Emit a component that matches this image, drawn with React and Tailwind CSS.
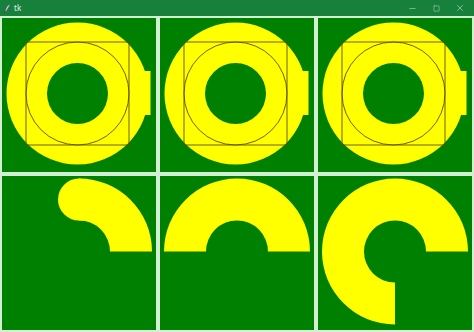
import { Minus, Square, X } from 'lucide-react';

const C = 75.5;

function pt(a, r, cx = C, cy = C) {
  const t = (a * Math.PI) / 180;
  return `${(cx + r * Math.cos(t)).toFixed(2)} ${(cy - r * Math.sin(t)).toFixed(2)}`;
}

// annular sector, angles in degrees counterclockwise from 3 o'clock
function sector(a0, a1, R, r, cx = C, cy = C) {
  const large = a1 - a0 > 180 ? 1 : 0;
  return `M ${pt(a0, R, cx, cy)} A ${R} ${R} 0 ${large} 0 ${pt(a1, R, cx, cy)} L ${pt(a1, r, cx, cy)} A ${r} ${r} 0 ${large} 1 ${pt(a0, r, cx, cy)} Z`;
}

function RingCanvas() {
  return (
    <svg viewBox="0 0 154 154" className="w-full h-full block">
      <path
        fillRule="evenodd"
        fill="#ffff00"
        d={`M ${C - 71} ${C} a 71 71 0 1 0 142 0 a 71 71 0 1 0 -142 0 Z M ${C - 30.5} ${C} a 30.5 30.5 0 1 0 61 0 a 30.5 30.5 0 1 0 -61 0 Z`}
      />
      <rect x="140" y="53" width="8.5" height="44" fill="#ffff00" />
      <rect x="24" y="24" width="103" height="103" fill="none" stroke="#5e4e00" strokeWidth="0.9" />
      <circle cx={C} cy={C} r="51.5" fill="none" stroke="#5e4e00" strokeWidth="0.9" />
    </svg>
  );
}

function ArcCanvas({ a0, a1, cap }) {
  const cx = 77;
  const cy = 75.5;
  return (
    <svg viewBox="0 0 154 154" className="w-full h-full block">
      <path fill="#ffff00" d={sector(a0, a1, 73, 31, cx, cy)} />
      {cap && <circle cx={cx} cy={cy - 52} r="21" fill="#ffff00" />}
    </svg>
  );
}

function Feather() {
  return (
    <svg width="9" height="11" viewBox="0 0 9 11">
      <path d="M7.5 0.8 C4.5 2 2.5 5 2 9 L3 9 C4.5 6 6.5 3.5 7.5 0.8 Z" fill="#c9d6e6" stroke="#3b4a5e" strokeWidth="0.6" />
      <path d="M2.4 8.6 L1.2 10.6" stroke="#3b4a5e" strokeWidth="0.8" />
    </svg>
  );
}

export default function App() {
  return (
    <div className="w-[474px] h-[332px] flex flex-col bg-[#d4f0d4] overflow-hidden" style={{ fontFamily: '"Segoe UI", "Noto Sans", "Liberation Sans", sans-serif' }}>
      <div className="h-4 shrink-0 bg-[#17813c] flex items-center pl-[3px] text-[#e4f1e8]">
        <Feather />
        <span className="ml-[2px] text-[8px] leading-none">tk</span>
        <div className="ml-auto flex items-center h-full">
          <div className="w-[24px] flex justify-center"><Minus size={9} strokeWidth={1.2} /></div>
          <div className="w-[24px] flex justify-center"><Square size={7} strokeWidth={1.4} /></div>
          <div className="w-[24px] mr-[2px] flex justify-center"><X size={10} strokeWidth={1.2} /></div>
        </div>
      </div>
      <div className="grid grid-cols-[154px_154px_154px] grid-rows-[154px_154px] gap-x-1 gap-y-1 px-[2px] pt-[2px]">
        <div className="bg-[#008000]"><RingCanvas /></div>
        <div className="bg-[#008000]"><RingCanvas /></div>
        <div className="bg-[#008000]"><RingCanvas /></div>
        <div className="bg-[#008000]"><ArcCanvas a0={0} a1={90} cap /></div>
        <div className="bg-[#008000]"><ArcCanvas a0={0} a1={180} /></div>
        <div className="bg-[#008000]"><ArcCanvas a0={0} a1={270} /></div>
      </div>
    </div>
  );
}
